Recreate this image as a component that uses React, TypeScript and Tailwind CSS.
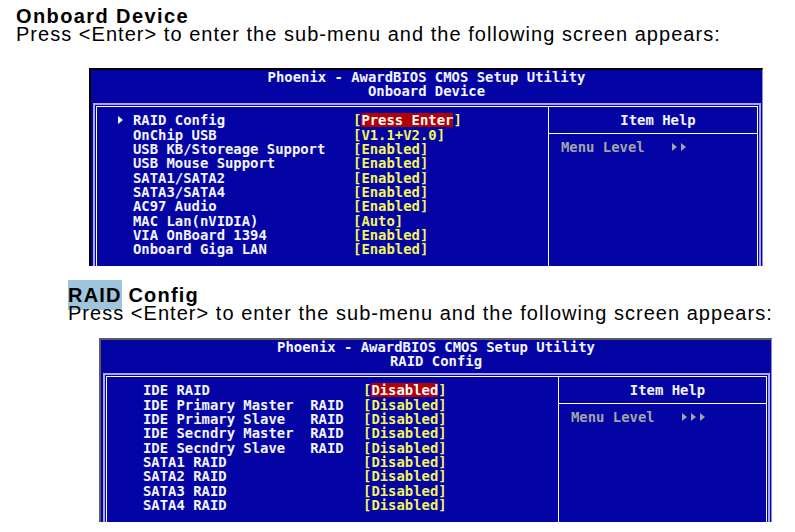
import React from "react";

type Row = { label: string; value: string; hi?: boolean; arrow?: boolean };

function Tri({ color }: { color: string }) {
  return (
    <svg width="5" height="8" viewBox="0 0 5 8" className="block">
      <polygon points="0,0 5,4 0,8" fill={color} />
    </svg>
  );
}

function Screen({
  title,
  rows,
  level,
  borderClass,
  heightClass,
  widthClass,
}: {
  title: string;
  rows: Row[];
  level: number;
  borderClass: string;
  heightClass: string;
  widthClass: string;
}) {
  return (
    <div
      className={`${widthClass} ${heightClass} ${borderClass} bg-[#0404a4] border-t-2 border-l-2 border-r border-r-[#8a8ad8] overflow-hidden font-['DejaVu_Sans_Mono',monospace] font-bold text-[13.9px] leading-[14px] text-[#f4f4ff]`}
    >
      <div className="h-[33px] text-center whitespace-pre">
        <div>Phoenix - AwardBIOS CMOS Setup Utility</div>
        <div>{title}</div>
      </div>
      <div className="ml-[2px] mr-[1px] h-[400px] border-2 border-[#a8a8f0] p-[1px]">
        <div className="h-full border border-white flex">
          <div className="w-[451px] pt-[6px] pl-[20px]">
            {rows.map((r, i) => (
              <div key={i} className="flex items-center h-[14.35px]">
                <div className="w-[16px] flex items-center pl-[1px]">
                  {r.arrow ? <Tri color="#f4f4ff" /> : null}
                </div>
                <div className="w-[220px] whitespace-pre">{r.label}</div>
                <div className="flex h-full items-center whitespace-pre text-[#f4f45c]">
                  <span>[</span>
                  <span
                    className={
                      r.hi
                        ? "bg-[#b40000] text-white h-full flex items-center"
                        : "h-full flex items-center"
                    }
                  >
                    {r.value}
                  </span>
                  <span>]</span>
                </div>
              </div>
            ))}
          </div>
          <div className="flex-1 border-l border-white flex flex-col">
            <div className="h-[27px] border-b border-white flex items-center justify-center pl-[10px]">
              Item Help
            </div>
            <div className="pt-[6px] pl-[12px] flex items-center text-[#a4a4a8]">
              <div className="w-[111px]">Menu Level</div>
              <div className="flex gap-[4px]">
                {Array.from({ length: level }).map((_, i) => (
                  <Tri key={i} color="#a4a4a8" />
                ))}
              </div>
            </div>
          </div>
        </div>
      </div>
    </div>
  );
}

const onboardRows: Row[] = [
  { label: "RAID Config", value: "Press Enter", hi: true, arrow: true },
  { label: "OnChip USB", value: "V1.1+V2.0" },
  { label: "USB KB/Storeage Support", value: "Enabled" },
  { label: "USB Mouse Support", value: "Enabled" },
  { label: "SATA1/SATA2", value: "Enabled" },
  { label: "SATA3/SATA4", value: "Enabled" },
  { label: "AC97 Audio", value: "Enabled" },
  { label: "MAC Lan(nVIDIA)", value: "Auto" },
  { label: "VIA OnBoard 1394", value: "Enabled" },
  { label: "Onboard Giga LAN", value: "Enabled" },
];

const raidRows: Row[] = [
  { label: "IDE RAID", value: "Disabled", hi: true },
  { label: "IDE Primary Master  RAID", value: "Disabled" },
  { label: "IDE Primary Slave   RAID", value: "Disabled" },
  { label: "IDE Secndry Master  RAID", value: "Disabled" },
  { label: "IDE Secndry Slave   RAID", value: "Disabled" },
  { label: "SATA1 RAID", value: "Disabled" },
  { label: "SATA2 RAID", value: "Disabled" },
  { label: "SATA3 RAID", value: "Disabled" },
  { label: "SATA4 RAID", value: "Disabled" },
];

export default function App() {
  return (
    <div className="w-[795px] h-[532px] overflow-hidden bg-white text-black font-['Liberation_Sans',Arial,sans-serif]">
      <div className="pt-[8px] pl-[16px]">
        <div className="text-[20px] font-bold tracking-[1.4px] leading-[17.5px]">
          Onboard Device
        </div>
        <div className="text-[20px] tracking-[1.03px] leading-[17.5px] whitespace-nowrap">
          Press &lt;Enter&gt; to enter the sub-menu and the following screen appears:
        </div>
      </div>
      <div className="mt-[25px] ml-[89px]">
        <Screen
          title="Onboard Device"
          rows={onboardRows}
          level={2}
          borderClass="border-black"
          heightClass="h-[198px]"
          widthClass="w-[674px]"
        />
      </div>
      <div className="mt-[21px] pl-[68px]">
        <div className="text-[20px] font-bold tracking-[1.2px] leading-[17.5px]">
          <span className="bg-[#9fc4dc] py-[4px]">RAID</span> Config
        </div>
        <div className="text-[20px] tracking-[1.03px] leading-[17.5px] whitespace-nowrap">
          Press &lt;Enter&gt; to enter the sub-menu and the following screen appears:
        </div>
      </div>
      <div className="mt-[16px] ml-[99px]">
        <Screen
          title="RAID Config"
          rows={raidRows}
          level={3}
          borderClass="border-[#5c5c5c]"
          heightClass="h-[184px]"
          widthClass="w-[673px]"
        />
      </div>
    </div>
  );
}
